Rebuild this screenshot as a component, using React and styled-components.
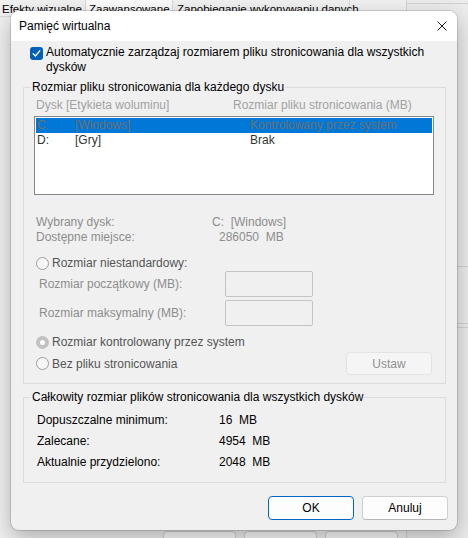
import React from "react";
import styled, { createGlobalStyle } from "styled-components";

const GlobalStyle = createGlobalStyle`
  html, body { margin: 0; padding: 0; }
  body {
    width: 468px; height: 538px; overflow: hidden; background: #e9e9e9;
    font-family: "Segoe UI", "Liberation Sans", Arial, sans-serif;
    font-size: 12px; color: #000;
  }
  * { box-sizing: border-box; }
`;

const Desktop = styled.div`
  position: relative;
  width: 468px;
  height: 538px;
  overflow: hidden;
  display: flex;
`;

const ParentWindow = styled.div`
  width: 407px;
  height: 538px;
  background: #f0f0f0;
  border-right: 1px solid #d4d4d4;
  display: flex;
  flex-direction: column;
`;

const ParentTabs = styled.div`
  display: flex;
  height: 16px;
  margin-top: 0;
`;

const ParentTab = styled.div`
  width: ${(p) => p.$w}px;
  padding-left: ${(p) => p.$pad}px;
  font-size: 11.5px;
  line-height: 18px;
  white-space: nowrap;
  background: ${(p) => (p.$active ? "#fafafa" : "#f0f0f0")};
  border: 1px solid #d9d9d9;
  border-top: none;
  border-bottom: none;
  margin-left: -1px;
`;

const ParentPanel = styled.div`
  flex: 1;
  border-top: 1px solid #d9d9d9;
`;

const ParentButtons = styled.div`
  height: 7px;
  display: flex;
  justify-content: flex-end;
  gap: 8px;
  padding-right: 8px;
`;

const ParentButton = styled.div`
  width: 73px;
  height: 23px;
  flex-shrink: 0;
  background: #fbfbfb;
  border: 1px solid #d0d0d0;
  border-radius: 4px;
`;

const OtherWindow = styled.div`
  flex: 1;
  background: #ececec;
  display: flex;
  flex-direction: column;
`;

const HLine = styled.div`
  margin-top: ${(p) => p.$mt}px;
  height: 1px;
  background: #d2d2d2;
`;

const Dialog = styled.div`
  position: absolute;
  left: 11px;
  top: 11px;
  width: 446px;
  height: 519px;
  background: #f0f0f0;
  border-radius: 8px;
  overflow: hidden;
  box-shadow: 0 0 0 1px rgba(0, 0, 0, 0.13), 0 8px 22px rgba(0, 0, 0, 0.28);
  display: flex;
  flex-direction: column;
`;

const TitleBar = styled.div`
  height: 30px;
  flex-shrink: 0;
  background: #ffffff;
  display: flex;
  align-items: center;
  justify-content: space-between;
  padding: 0 10px 0 8px;
`;

const Title = styled.span`
  line-height: 16px;
  color: #000;
`;

const CloseIcon = styled.svg`
  width: 10px;
  height: 10px;
  display: block;
`;

const Body = styled.div`
  flex: 1;
  display: flex;
  flex-direction: column;
  padding: 4px 11px 10px 12px;
`;

const CheckRow = styled.div`
  display: flex;
  align-items: flex-start;
  gap: 3px;
  padding-left: 7px;
`;

const CheckBox = styled.div`
  width: 13px;
  height: 13px;
  margin-top: 2px;
  flex-shrink: 0;
  border-radius: 3px;
  background: #005fb8;
  display: flex;
  align-items: center;
  justify-content: center;
`;

const CheckText = styled.div`
  line-height: 15px;
  color: #000;
`;

const Group = styled.fieldset`
  margin: ${(p) => p.$mt}px 0 0 0;
  padding: 0 0 ${(p) => p.$pb}px 0;
  border: 1px solid #dcdcdc;
  min-width: 0;
`;

const Legend = styled.legend`
  margin-left: 7px;
  padding: 0 1px;
  line-height: 16px;
  color: #000;
`;

const ColumnHeader = styled.div`
  display: grid;
  grid-template-columns: 197px 1fr;
  margin: 2px 11px 0 12px;
  line-height: 16px;
  color: #a2a2a2;
  white-space: nowrap;
`;

const ListBox = styled.div`
  margin: 3px 11px 0 10px;
  height: 79px;
  background: #ffffff;
  border: 1px solid #828790;
  padding: 1px;
`;

const ListRow = styled.div`
  display: grid;
  grid-template-columns: 38px 175px 1fr;
  height: 15px;
  line-height: 15px;
  padding-left: 1px;
  white-space: nowrap;
  background: ${(p) => (p.$selected ? "#0078d7" : "transparent")};
  color: ${(p) => (p.$selected ? "#6f6f6f" : "#333333")};
`;

const InfoGrid = styled.div`
  display: grid;
  grid-template-columns: 176px 1fr;
  margin: 20px 0 0 12px;
  line-height: 15px;
  color: #8d8d8d;
`;

const InfoValue = styled.span`
  padding-left: ${(p) => p.$indent || 0}px;
  white-space: pre;
`;

const RadioRow = styled.div`
  display: flex;
  align-items: center;
  justify-content: space-between;
  margin-top: ${(p) => p.$mt}px;
  padding-left: 12px;
  padding-right: 13px;
  height: ${(p) => p.$h || 16}px;
`;

const RadioLabel = styled.div`
  display: flex;
  align-items: center;
  gap: 3px;
  line-height: 16px;
  color: #555555;
  white-space: nowrap;
`;

const Radio = styled.div`
  width: 13px;
  height: 13px;
  border-radius: 50%;
  flex-shrink: 0;
  border: 1px solid ${(p) => (p.$checked ? "#c2c2c2" : "#9d9d9d")};
  background: ${(p) => (p.$checked ? "#c2c2c2" : "#f6f6f6")};
  display: flex;
  align-items: center;
  justify-content: center;
  &::after {
    content: "";
    display: ${(p) => (p.$checked ? "block" : "none")};
    width: 5px;
    height: 5px;
    border-radius: 50%;
    background: #ffffff;
  }
`;

const FieldRow = styled.div`
  display: grid;
  grid-template-columns: 186px 88px;
  align-items: center;
  margin-top: ${(p) => p.$mt}px;
  padding-left: 15px;
  height: 26px;
  color: #8d8d8d;
  white-space: nowrap;
`;

const FieldInput = styled.div`
  height: 26px;
  border: 1px solid #c4c4c4;
  border-radius: 2px;
  background: #f0f0f0;
`;

const SmallButton = styled.div`
  width: 86px;
  height: 23px;
  border: 1px solid #e3e3e3;
  border-radius: 4px;
  background: #f5f5f5;
  color: #8f8f8f;
  display: flex;
  align-items: center;
  justify-content: center;
`;

const TotalsGrid = styled.div`
  display: grid;
  grid-template-columns: 182px 1fr;
  margin-top: 5px;
  padding-left: 13px;
  line-height: 21px;
  color: #000;
`;

const ButtonRow = styled.div`
  display: flex;
  justify-content: flex-end;
  gap: 8px;
  margin: 13px -2px 0 0;
`;

const DialogButton = styled.div`
  width: 86px;
  height: 24px;
  border-radius: 4px;
  background: #fdfdfd;
  border: 1px solid ${(p) => (p.$default ? "#0067c0" : "#d0d0d0")};
  border-bottom-color: ${(p) => (p.$default ? "#0067c0" : "#b8b8b8")};
  color: #000;
  display: flex;
  align-items: center;
  justify-content: center;
`;

export default function App() {
  return (
    <>
      <GlobalStyle />
      <Desktop>
        <ParentWindow>
          <ParentTabs>
            <ParentTab $w={87} $pad={2}>Efekty wizualne</ParentTab>
            <ParentTab $w={88} $pad={3} $active>Zaawansowane</ParentTab>
            <ParentTab $w={178} $pad={4}>Zapobieganie wykonywaniu danych</ParentTab>
          </ParentTabs>
          <ParentPanel />
          <ParentButtons>
            <ParentButton />
            <ParentButton />
            <ParentButton />
          </ParentButtons>
        </ParentWindow>
        <OtherWindow>
          <HLine $mt={3} />
          <HLine $mt={262} />
          <HLine $mt={56} />
          <HLine $mt={3} />
        </OtherWindow>

        <Dialog>
          <TitleBar>
            <Title>Pamięć wirtualna</Title>
            <CloseIcon viewBox="0 0 10 10">
              <path d="M0.5 0.5 L9.5 9.5 M9.5 0.5 L0.5 9.5" stroke="#1a1a1a" strokeWidth="1" fill="none" />
            </CloseIcon>
          </TitleBar>
          <Body>
            <CheckRow>
              <CheckBox>
                <svg width="9" height="9" viewBox="0 0 9 9">
                  <path d="M1.2 4.8 L3.4 7 L7.8 1.8" stroke="#fff" strokeWidth="1.3" fill="none" strokeLinecap="round" strokeLinejoin="round" />
                </svg>
              </CheckBox>
              <CheckText>
                Automatycznie zarządzaj rozmiarem pliku stronicowania dla wszystkich
                <br />
                dysków
              </CheckText>
            </CheckRow>

            <Group $mt={4} $pb={8}>
              <Legend>Rozmiar pliku stronicowania dla każdego dysku</Legend>
              <ColumnHeader>
                <span>Dysk [Etykieta woluminu]</span>
                <span>Rozmiar pliku stronicowania (MB)</span>
              </ColumnHeader>
              <ListBox>
                <ListRow $selected>
                  <span>C:</span>
                  <span>[Windows]</span>
                  <span>Kontrolowany przez system</span>
                </ListRow>
                <ListRow>
                  <span>D:</span>
                  <span>[Gry]</span>
                  <span>Brak</span>
                </ListRow>
              </ListBox>
              <InfoGrid>
                <span>Wybrany dysk:</span>
                <InfoValue>C:  [Windows]</InfoValue>
                <span>Dostępne miejsce:</span>
                <InfoValue $indent={7}>286050  MB</InfoValue>
              </InfoGrid>
              <RadioRow $mt={10}>
                <RadioLabel>
                  <Radio />
                  Rozmiar niestandardowy:
                </RadioLabel>
              </RadioRow>
              <FieldRow $mt={0}>
                <span>Rozmiar początkowy (MB):</span>
                <FieldInput />
              </FieldRow>
              <FieldRow $mt={3}>
                <span>Rozmiar maksymalny (MB):</span>
                <FieldInput />
              </FieldRow>
              <RadioRow $mt={8}>
                <RadioLabel>
                  <Radio $checked />
                  Rozmiar kontrolowany przez system
                </RadioLabel>
              </RadioRow>
              <RadioRow $mt={2} $h={23}>
                <RadioLabel>
                  <Radio />
                  Bez pliku stronicowania
                </RadioLabel>
                <SmallButton>Ustaw</SmallButton>
              </RadioRow>
            </Group>

            <Group $mt={5} $pb={9}>
              <Legend>Całkowity rozmiar plików stronicowania dla wszystkich dysków</Legend>
              <TotalsGrid>
                <span>Dopuszczalne minimum:</span>
                <InfoValue>16  MB</InfoValue>
                <span>Zalecane:</span>
                <InfoValue>4954  MB</InfoValue>
                <span>Aktualnie przydzielono:</span>
                <InfoValue>2048  MB</InfoValue>
              </TotalsGrid>
            </Group>

            <ButtonRow>
              <DialogButton $default>OK</DialogButton>
              <DialogButton>Anuluj</DialogButton>
            </ButtonRow>
          </Body>
        </Dialog>
      </Desktop>
    </>
  );
}
